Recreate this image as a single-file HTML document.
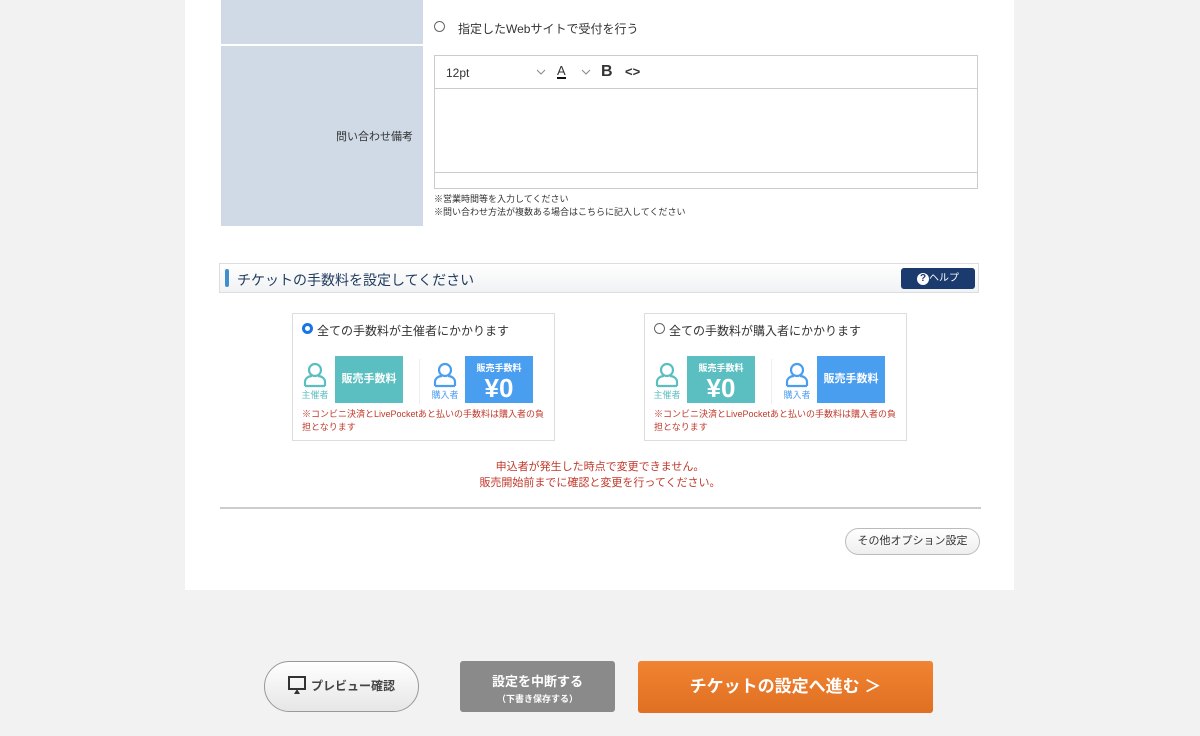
<!DOCTYPE html><html><head><meta charset="utf-8"><style>
*{box-sizing:border-box;margin:0;padding:0}
body{width:1200px;height:736px;background:#f2f2f2;font-family:"Liberation Sans","Noto Sans CJK JP",sans-serif;color:#333;position:relative;overflow:hidden}
.a{position:absolute}
.panel{left:185px;top:0;width:829px;height:590px;background:#fff}
.lab{background:#cfdae6}
.card{border:1px solid #ddd;background:#fff}
.blk{position:absolute;top:42px;width:68px;height:47px;color:#fff;font-weight:bold;text-align:center}
.note{font-size:9px;color:#c0392b;line-height:13px}
.p{position:absolute;width:30px;text-align:center;font-size:9px;white-space:nowrap}
</style></head><body>
<div class="a panel"></div>
<div class="a lab" style="left:221px;top:0;width:202px;height:44px"></div>
<div class="a lab" style="left:221px;top:46px;width:202px;height:180px"></div>
<div class="a" style="left:336px;top:128px;font-size:11px">問い合わせ備考</div>
<div class="a" style="left:434px;top:21px;width:11px;height:11px;border:1px solid #666;border-radius:50%"></div>
<div class="a" style="left:458px;top:20px;font-size:12px">指定したWebサイトで受付を行う</div>
<div class="a" style="left:434px;top:55px;width:544px;height:134px;border:1px solid #ccc">
 <div style="height:33px;border-bottom:1px solid #ccc;position:relative;font-size:12px">
  <span class="a" style="left:11px;top:10px">12pt</span>
  <svg class="a" style="left:101px;top:13px" width="10" height="6"><path d="M1 1l4 4 4-4" fill="none" stroke="#888"/></svg>
  <span class="a" style="left:122px;top:9px;font-size:13px;border-bottom:2px solid #111;line-height:12px">A</span>
  <svg class="a" style="left:146px;top:13px" width="10" height="6"><path d="M1 1l4 4 4-4" fill="none" stroke="#888"/></svg>
  <span class="a" style="left:166px;top:7px;font-size:16px;font-weight:bold">B</span>
  <span class="a" style="left:190px;top:8px;font-size:13px;font-weight:bold">&lt;&gt;</span>
 </div>
 <div style="height:84px;border-bottom:1px solid #ccc"></div>
</div>
<div class="a" style="left:434px;top:193px;font-size:9px;line-height:13px">※営業時間等を入力してください<br>※問い合わせ方法が複数ある場合はこちらに記入してください</div>
<div class="a" style="left:219px;top:263px;width:760px;height:30px;border:1px solid #ddd;background:linear-gradient(#fff,#f1f2f4)">
 <div class="a" style="left:5px;top:5px;width:4px;height:18px;background:#3e8ed0;border-radius:2px"></div>
 <div class="a" style="left:17px;top:6px;font-size:14px;color:#1f3a5c">チケットの手数料を設定してください</div>
 <div class="a" style="left:681px;top:4px;width:74px;height:21px;background:#1b3a6d;border-radius:3px;color:#fff;font-size:10px;line-height:21px;text-align:center"><span style="display:inline-block;width:12px;height:12px;border-radius:50%;background:#fff;color:#1b3a6d;line-height:12px;font-weight:bold">?</span>ヘルプ</div>
</div>
<svg width="0" height="0" style="position:absolute"><defs><g id="pp"><circle cx="12" cy="8" r="6" fill="none" stroke-width="2.2"/><path d="M2 24v-4c0-4 4-6 7-6M22 24v-4c0-4-4-6-7-6M2 24h20" fill="none" stroke-width="2.2"/></g></defs></svg>
<div class="a card" style="left:292px;top:313px;width:263px;height:128px">
 <div class="a" style="left:9px;top:9px;width:11px;height:11px;border-radius:50%;border:3px solid #1a73e8;background:#fff"></div>
 <div class="a" style="left:24px;top:8px;font-size:12px">全ての手数料が主催者にかかります</div>
 <svg class="a" style="left:10px;top:48px" width="24" height="26" stroke="#5bbfc1"><use href="#pp"/></svg><div class="p" style="left:7px;top:74px;color:#5bbfc1">主催者</div>
 <div class="blk" style="left:42px;background:#5bbfc1;font-size:11px;line-height:47px">販売手数料</div>
 <div class="a" style="left:126px;top:45px;width:1px;height:45px;background:#eee"></div>
 <svg class="a" style="left:140px;top:48px" width="24" height="26" stroke="#4a9ef0"><use href="#pp"/></svg><div class="p" style="left:137px;top:74px;color:#4a9ef0">購入者</div>
 <div class="blk" style="left:172px;background:#4a9ef0"><div style="font-size:9px;margin-top:5px">販売手数料</div><div style="font-size:26px;line-height:28px">¥0</div></div>
 <div class="a note" style="left:9px;top:94px;width:245px">※コンビニ決済とLivePocketあと払いの手数料は購入者の負担となります</div>
</div>
<div class="a card" style="left:644px;top:313px;width:263px;height:128px">
 <div class="a" style="left:9px;top:9px;width:11px;height:11px;border-radius:50%;border:1px solid #666"></div>
 <div class="a" style="left:24px;top:8px;font-size:12px">全ての手数料が購入者にかかります</div>
 <svg class="a" style="left:10px;top:48px" width="24" height="26" stroke="#5bbfc1"><use href="#pp"/></svg><div class="p" style="left:7px;top:74px;color:#5bbfc1">主催者</div>
 <div class="blk" style="left:42px;background:#5bbfc1"><div style="font-size:9px;margin-top:5px">販売手数料</div><div style="font-size:26px;line-height:28px">¥0</div></div>
 <div class="a" style="left:126px;top:45px;width:1px;height:45px;background:#eee"></div>
 <svg class="a" style="left:140px;top:48px" width="24" height="26" stroke="#4a9ef0"><use href="#pp"/></svg><div class="p" style="left:137px;top:74px;color:#4a9ef0">購入者</div>
 <div class="blk" style="left:172px;background:#4a9ef0;font-size:11px;line-height:47px">販売手数料</div>
 <div class="a note" style="left:9px;top:94px;width:245px">※コンビニ決済とLivePocketあと払いの手数料は購入者の負担となります</div>
</div>
<div class="a" style="left:220px;top:459px;width:760px;text-align:center;font-size:11px;line-height:16px;color:#c0392b">申込者が発生した時点で変更できません。<br>販売開始前までに確認と変更を行ってください。</div>
<div class="a" style="left:220px;top:507px;width:761px;height:2px;background:#ccc"></div>
<div class="a" style="left:845px;top:528px;width:135px;height:27px;border:1px solid #bbb;border-radius:14px;background:linear-gradient(#fff,#eee);font-size:11px;line-height:25px;text-align:center">その他オプション設定</div>
<div class="a" style="left:264px;top:661px;width:155px;height:51px;border:1px solid #999;border-radius:26px;background:linear-gradient(#fff,#e6e6e6);font-size:12px;font-weight:bold;line-height:49px;text-align:center;color:#444"><svg width="18" height="18" style="vertical-align:-4px;margin-right:5px"><rect x="1" y="1" width="16" height="12" fill="none" stroke="#333" stroke-width="2"/><path d="M6 18l3-5 3 5z" fill="#333"/></svg>プレビュー確認</div>
<div class="a" style="left:460px;top:661px;width:155px;height:51px;background:#8a8a8a;border-radius:3px;color:#fff;text-align:center;font-weight:bold"><div style="font-size:13px;margin-top:10px">設定を中断する</div><div style="font-size:9px;margin-top:2px">（下書き保存する）</div></div>
<div class="a" style="left:638px;top:661px;width:295px;height:52px;background:linear-gradient(#f08432,#e06f22);border-radius:3px;color:#fff;font-size:17px;font-weight:bold;line-height:52px;text-align:center">チケットの設定へ進む ＞</div>
</body></html>
